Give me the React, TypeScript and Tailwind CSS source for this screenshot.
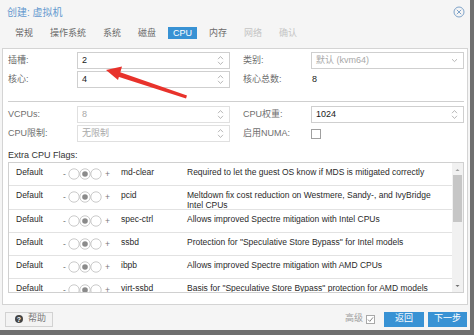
import React from "react";

function Spinner() {
  return (
    <svg width="7" height="11" viewBox="0 0 7 11" className="shrink-0">
      <path d="M1 4.2 L3.5 1.5 L6 4.2" fill="none" stroke="#b0b0b0" strokeWidth="0.9" />
      <path d="M1 6.8 L3.5 9.5 L6 6.8" fill="none" stroke="#b0b0b0" strokeWidth="0.9" />
    </svg>
  );
}

function Chevron() {
  return (
    <svg width="7" height="5" viewBox="0 0 7 5" className="shrink-0">
      <path d="M1 1.2 L3.5 3.6 L6 1.2" fill="none" stroke="#b0b0b0" strokeWidth="0.9" />
    </svg>
  );
}

function Field({ value, disabled, select }: { value: string; disabled?: boolean; select?: boolean }) {
  return (
    <div
      className={`h-[17px] border ${disabled ? "border-[#e0e0e0]" : "border-[#cfcfcf]"} bg-white flex items-center justify-between pl-[4px] pr-[5px]`}
    >
      <span className={disabled || select ? "text-[#a8a8a8]" : "text-[#1a1a1a]"}>{value}</span>
      {select ? <Chevron /> : <Spinner />}
    </div>
  );
}

function Label({ children }: { children: React.ReactNode }) {
  return <div className="text-[#6e6e6e] flex items-center h-[17px]">{children}</div>;
}

function Tri() {
  return (
    <div className="flex items-center text-[#777] pt-[4px] h-[18px]">
      <span className="w-[5px] text-center leading-none">-</span>
      <svg width="36" height="12" viewBox="0 0 36 12" className="ml-[1px]">
        <circle cx="6" cy="6" r="5.2" fill="white" stroke="#bdbdbd" strokeWidth="0.8" />
        <circle cx="17" cy="6" r="5.2" fill="white" stroke="#bdbdbd" strokeWidth="0.8" />
        <circle cx="17" cy="6" r="2.8" fill="#8a8a8a" />
        <circle cx="28" cy="6" r="5.2" fill="white" stroke="#bdbdbd" strokeWidth="0.8" />
      </svg>
      <span className="ml-[1px] leading-none">+</span>
    </div>
  );
}

const rows: [string, string][] = [
  ["md-clear", "Required to let the guest OS know if MDS is mitigated correctly"],
  ["pcid", "Meltdown fix cost reduction on Westmere, Sandy-, and IvyBridge Intel CPUs"],
  ["spec-ctrl", "Allows improved Spectre mitigation with Intel CPUs"],
  ["ssbd", 'Protection for "Speculative Store Bypass" for Intel models'],
  ["ibpb", "Allows improved Spectre mitigation with AMD CPUs"],
  ["virt-ssbd", 'Basis for "Speculative Store Bypass" protection for AMD models'],
];

const tabs = ["常规", "操作系统", "系统", "磁盘", "CPU", "内存", "网络", "确认"];

export default function App() {
  return (
    <div className="relative w-[474px] h-[335px] overflow-hidden bg-[#f5f5f5] flex flex-col font-['Liberation_Sans','Noto_Sans_CJK_SC',sans-serif] text-[9px]">
      <div className="flex h-[330px]">
        <div className="w-[470px] flex flex-col">
          {/* header */}
          <div className="h-[48px] flex flex-col">
            <div className="h-[24px] flex items-center justify-between pl-[7px] pr-[5px]">
              <span className="text-[10px] text-[#6499cf]">创建: 虚拟机</span>
              <svg width="12" height="12" viewBox="0 0 12 12">
                <circle cx="6" cy="6" r="5" fill="none" stroke="#7fa3c9" strokeWidth="1" />
                <path d="M3.8 3.8 L8.2 8.2 M8.2 3.8 L3.8 8.2" stroke="#7fa3c9" strokeWidth="1" />
              </svg>
            </div>
            <div className="h-[18px] flex items-center gap-[7px] pl-[10px]">
              {tabs.map((t) => (
                <div
                  key={t}
                  className={`h-[12px] px-[5px] flex items-center leading-none ${
                    t === "CPU"
                      ? "bg-[#3892d4] text-white"
                      : t === "网络" || t === "确认"
                      ? "text-[#c4c4c4]"
                      : "text-[#6a6a6a]"
                  }`}
                >
                  {t}
                </div>
              ))}
            </div>
          </div>

          {/* panel */}
          <div className="mx-[2px] h-[257px] border border-[#d4d4d4] bg-white flex flex-col px-[5px] pt-[3px]">
            <div className="grid grid-cols-[69px_153px_13px_68px_153px] gap-y-[2px]">
              <Label>插槽:</Label>
              <Field value="2" />
              <div />
              <Label>类别:</Label>
              <Field value="默认 (kvm64)" select />

              <Label>核心:</Label>
              <Field value="4" />
              <div />
              <Label>核心总数:</Label>
              <div className="h-[17px] flex items-center pl-[1px] text-[#1a1a1a]">8</div>
            </div>

            <div className="mt-[13px] h-px bg-[#cfcfcf] w-[456px]" />

            <div className="mt-[4px] grid grid-cols-[69px_153px_13px_68px_153px] gap-y-[2px]">
              <Label>VCPUs:</Label>
              <Field value="8" disabled />
              <div />
              <Label>CPU权重:</Label>
              <Field value="1024" />

              <Label>CPU限制:</Label>
              <Field value="无限制" disabled />
              <div />
              <Label>启用NUMA:</Label>
              <div className="h-[17px] flex items-center">
                <div className="w-[10px] h-[10px] border border-[#a0a0a0] bg-white" />
              </div>
            </div>

            <div className="mt-[8px] h-[11px] flex items-center text-[#333]">Extra CPU Flags:</div>

            <div className="mt-[1px] w-[456px] h-[131px] border border-[#d0d0d0] flex text-[#2a2a2a] text-[8.5px]">
              <div className="flex-1 overflow-hidden flex flex-col">
                {rows.map(([name, desc]) => (
                  <div
                    key={name}
                    className={`flex shrink-0 border-b border-[#e2e2e2] ${name === "pcid" ? "h-[24px]" : "h-[23px]"}`}
                  >
                    <div className="w-[52px] pl-[7px] pt-[4px] leading-[10px]">Default</div>
                    <div className="w-[60px] pl-[1px]">
                      <Tri />
                    </div>
                    <div className="w-[66px] pt-[4px] leading-[10px]">{name}</div>
                    <div className="w-[258px] pt-[4px] leading-[10px]">{desc}</div>
                  </div>
                ))}
              </div>
              <div className="w-[11px] bg-[#f1f1f1] flex flex-col items-center">
                <svg width="7" height="10" viewBox="0 0 7 10" className="mt-[2px]">
                  <path d="M1.5 6 L3.5 4 L5.5 6 Z" fill="#a0a0a0" />
                </svg>
                <div className="w-[9px] h-[47px] bg-[#c6c6c6]" />
                <div className="flex-1" />
                <svg width="7" height="10" viewBox="0 0 7 10" className="mb-[1px]">
                  <path d="M1.5 4 L3.5 6 L5.5 4 Z" fill="#707070" />
                </svg>
              </div>
            </div>
          </div>

          {/* footer */}
          <div className="flex-1 flex items-center justify-between pl-[5px] pr-[3px] pt-[3px]">
            <div className="w-[48px] h-[15px] border border-[#d2d2d2] bg-[#f3f3f3] flex items-center pl-[9px] gap-[5px]">
              <div className="w-[8px] h-[8px] rounded-full bg-[#444] text-white text-[7px] leading-none flex items-center justify-center font-bold">
                ?
              </div>
              <span className="text-[#777]">帮助</span>
            </div>
            <div className="flex items-center">
              <span className="text-[#a0a0a0]">高级</span>
              <div className="ml-[3px] w-[9px] h-[9px] border border-[#a8a8a8] bg-white flex items-center justify-center">
                <svg width="7" height="7" viewBox="0 0 7 7">
                  <path d="M1 3.6 L2.8 5.4 L6 1.4" fill="none" stroke="#888" strokeWidth="1" />
                </svg>
              </div>
              <div className="ml-[9px] w-[40px] h-[15px] bg-[#3892d4] text-white flex items-center justify-center">返回</div>
              <div className="ml-[4px] w-[39px] h-[15px] bg-[#3892d4] text-white flex items-center justify-center">下一步</div>
            </div>
          </div>
        </div>
        <div className="w-[4px] bg-[#6f6f6f]" />
      </div>
      <div className="h-[5px] bg-[#6f6f6f]" />

      {/* red arrow annotation */}
      <svg className="absolute left-0 top-0 pointer-events-none" width="474" height="335" viewBox="0 0 474 335">
        <polygon points="106,70 122,66.5 118,80" fill="#e8322b" />
        <polygon points="118,71.5 187,95.6 186,98.4 116,76" fill="#e8322b" />
      </svg>
    </div>
  );
}
